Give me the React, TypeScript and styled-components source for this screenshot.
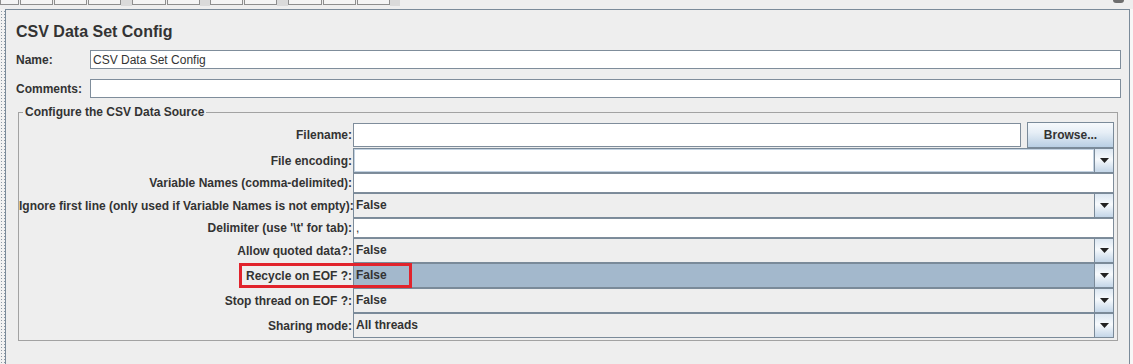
import React from "react";
import styled, { createGlobalStyle } from "styled-components";

const GlobalStyle = createGlobalStyle`
  html, body {
    margin: 0;
    padding: 0;
    background: #eeeeee;
  }
  body {
    font-family: "Liberation Sans", Arial, sans-serif;
    font-size: 12px;
    color: #333333;
  }
`;

const Window = styled.div`
  width: 1133px;
  height: 364px;
  display: flex;
  flex-direction: column;
  background: #eeeeee;
  overflow: hidden;
`;

/* ---------- toolbar (only the lower edge is visible) ---------- */

const Toolbar = styled.div`
  height: 9px;
  flex-shrink: 0;
  display: flex;
  align-items: flex-start;
`;

const ToolGroup = styled.div`
  display: flex;
  gap: 1px;
`;

const ToolButton = styled.div<{ $w: number }>`
  width: ${(p) => p.$w}px;
  height: 5px;
  box-sizing: border-box;
  border: 1px solid #8e8e8e;
  border-top: none;
  background: #f4f4f4;
`;

const ToolSeparator = styled.div<{ $w: number }>`
  width: ${(p) => p.$w}px;
  height: 6px;
  background: #dadada;
`;

const CornerKnob = styled.div`
  margin-left: auto;
  margin-right: 9px;
  width: 11px;
  height: 3px;
  background: #6e6e6e;
  border-radius: 0 0 4px 4px;
`;

/* ---------- main area ---------- */

const Main = styled.div`
  flex: 1;
  display: flex;
`;

const Splitter = styled.div`
  width: 5px;
  flex-shrink: 0;
  background-color: #f2f2f2;
  background-image: radial-gradient(#8e9aa6 0.8px, transparent 0.9px);
  background-size: 3px 3px;
  background-position: 0 1px;
`;

const Panel = styled.div`
  flex: 1;
  display: flex;
  flex-direction: column;
  border: 1px solid #7a8a99;
  border-bottom: none;
  padding: 0 8px 0 10px;
  min-width: 0;
`;

const RightEdge = styled.div`
  width: 3px;
  flex-shrink: 0;
  background: #f7f7f7;
`;

const Title = styled.h1`
  margin: 12px 0 0;
  font-size: 16px;
  line-height: 20px;
  font-weight: bold;
  color: #333333;
`;

const FormRow = styled.div<{ $mt: number }>`
  display: flex;
  align-items: center;
  height: 19px;
  margin-top: ${(p) => p.$mt}px;
`;

const RowLabel = styled.label`
  width: 74px;
  flex-shrink: 0;
  font-weight: bold;
  white-space: nowrap;
`;

const TextField = styled.input<{ $h: number }>`
  flex: 1;
  min-width: 0;
  height: ${(p) => p.$h}px;
  box-sizing: border-box;
  margin: 0;
  padding: 0 2px;
  border: 1px solid #7f8d9b;
  background: #ffffff;
  font-family: inherit;
  font-size: 12px;
  color: #333333;
  outline: none;
`;

/* ---------- group box ---------- */

const GroupBox = styled.fieldset`
  margin: 7px 3px 0 2px;
  padding: 3px 3px 2px 0;
  border: 1px solid #a2a2a2;
  min-width: 0;
`;

const GroupLegend = styled.legend`
  margin-left: 4px;
  padding: 0 2px;
  line-height: 14px;
  font-weight: bold;
  color: #333333;
`;

const Grid = styled.div`
  display: grid;
  grid-template-columns: 333px 1fr;
  grid-template-rows: 26px 25px 20px 25px 20px 25px 25px 25px 25px;
  column-gap: 1px;
`;

const GridLabel = styled.label<{ $row: number }>`
  grid-row: ${(p) => p.$row};
  grid-column: 1;
  align-self: center;
  text-align: right;
  white-space: nowrap;
  font-weight: bold;
  color: #333333;
`;

const GridCell = styled.div<{ $row: number }>`
  grid-row: ${(p) => p.$row};
  grid-column: 2;
  display: flex;
  align-items: center;
  gap: 6px;
  min-width: 0;
`;

const BrowseButton = styled.button`
  width: 87px;
  height: 26px;
  flex-shrink: 0;
  margin: 0;
  padding: 0;
  border: 1px solid #7a8a99;
  background: linear-gradient(#f6f9fc 0%, #e6eef6 40%, #b9cfe4 100%);
  font-family: inherit;
  font-size: 12px;
  font-weight: bold;
  color: #333333;
`;

const Combo = styled.div<{ $bg: string }>`
  flex: 1;
  height: 25px;
  box-sizing: border-box;
  display: flex;
  border: 1px solid #7a8a99;
  background: ${(p) => p.$bg};
  min-width: 0;
`;

const ComboValue = styled.div<{ $editable?: boolean }>`
  flex: 1;
  padding-left: 2px;
  line-height: 23px;
  font-weight: bold;
  color: #333333;
  box-shadow: ${(p) => (p.$editable ? "inset 0 0 0 1px #c3d2e1" : "none")};
`;

const ComboArrow = styled.div`
  width: 18px;
  flex-shrink: 0;
  border-left: 1px solid #7a8a99;
  background: linear-gradient(#dce7f2 0%, #f7fafd 45%, #c4d6e8 100%);
  display: flex;
  align-items: center;
  justify-content: center;
`;

const Highlight = styled.div`
  grid-row: 7;
  grid-column: 1 / span 2;
  justify-self: start;
  margin-left: 220px;
  width: 173px;
  box-sizing: border-box;
  border: 3px solid #e1232c;
  z-index: 1;
  pointer-events: none;
`;

type Row =
  | { label: string; kind: "file" }
  | { label: string; kind: "editCombo" }
  | { label: string; kind: "text"; value: string }
  | { label: string; kind: "combo"; value: string; selected?: boolean };

const rows: Row[] = [
  { label: "Filename:", kind: "file" },
  { label: "File encoding:", kind: "editCombo" },
  { label: "Variable Names (comma-delimited):", kind: "text", value: "" },
  {
    label: "Ignore first line (only used if Variable Names is not empty):",
    kind: "combo",
    value: "False",
  },
  { label: "Delimiter (use '\\t' for tab):", kind: "text", value: "," },
  { label: "Allow quoted data?:", kind: "combo", value: "False" },
  { label: "Recycle on EOF ?:", kind: "combo", value: "False", selected: true },
  { label: "Stop thread on EOF ?:", kind: "combo", value: "False" },
  { label: "Sharing mode:", kind: "combo", value: "All threads" },
];

const toolGroups = [
  { buttons: [19, 33, 33, 33], sep: 11 },
  { buttons: [34, 33], sep: 10 },
  { buttons: [33, 33], sep: 11 },
  { buttons: [34, 33, 33], sep: 10 },
];

const Arrow = () => (
  <svg width="9" height="5" viewBox="0 0 9 5">
    <path d="M0 0 L9 0 L4.5 5 Z" fill="#222" />
  </svg>
);

const Field = ({ row }: { row: Row }) => {
  switch (row.kind) {
    case "file":
      return (
        <>
          <TextField $h={24} readOnly value="" />
          <BrowseButton>Browse...</BrowseButton>
        </>
      );
    case "editCombo":
      return (
        <Combo $bg="#ffffff">
          <ComboValue $editable />
          <ComboArrow>
            <Arrow />
          </ComboArrow>
        </Combo>
      );
    case "text":
      return <TextField $h={20} readOnly value={row.value} />;
    case "combo":
      return (
        <Combo $bg={row.selected ? "#a3b8cc" : "#eeeeee"}>
          <ComboValue>{row.value}</ComboValue>
          <ComboArrow>
            <Arrow />
          </ComboArrow>
        </Combo>
      );
  }
};

export default function App() {
  return (
    <>
      <GlobalStyle />
      <Window>
        <Toolbar>
          {toolGroups.map((g, i) => (
            <React.Fragment key={i}>
              <ToolGroup>
                {g.buttons.map((w, j) => (
                  <ToolButton key={j} $w={w} />
                ))}
              </ToolGroup>
              <ToolSeparator $w={g.sep} />
            </React.Fragment>
          ))}
          <CornerKnob />
        </Toolbar>
        <Main>
          <Splitter />
          <Panel>
            <Title>CSV Data Set Config</Title>
            <FormRow $mt={8}>
              <RowLabel>Name:</RowLabel>
              <TextField $h={19} readOnly value="CSV Data Set Config" />
            </FormRow>
            <FormRow $mt={10}>
              <RowLabel>Comments:</RowLabel>
              <TextField $h={19} readOnly value="" />
            </FormRow>
            <GroupBox>
              <GroupLegend>Configure the CSV Data Source</GroupLegend>
              <Grid>
                {rows.map((row, i) => (
                  <React.Fragment key={row.label}>
                    <GridLabel $row={i + 1}>{row.label}</GridLabel>
                    <GridCell $row={i + 1}>
                      <Field row={row} />
                    </GridCell>
                  </React.Fragment>
                ))}
                <Highlight />
              </Grid>
            </GroupBox>
          </Panel>
          <RightEdge />
        </Main>
      </Window>
    </>
  );
}
